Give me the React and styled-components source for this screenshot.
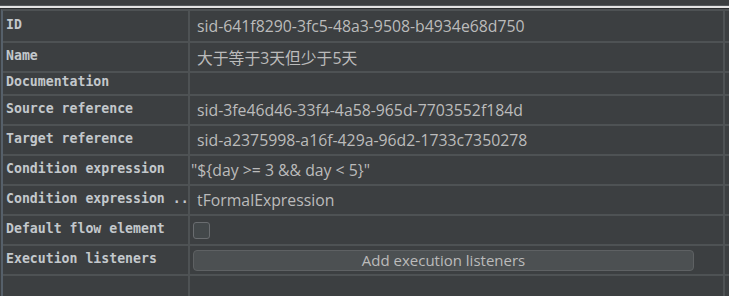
import React from "react";
import styled, { createGlobalStyle } from "styled-components";

const GlobalStyle = createGlobalStyle`
  html, body {
    margin: 0;
    padding: 0;
    background: #3c3f41;
    overflow: hidden;
  }
`;

const rows = [
  { label: "ID", value: "sid-641f8290-3fc5-48a3-9508-b4934e68d750", height: 30 },
  { label: "Name", value: "大于等于3天但少于5天", height: 28 },
  { label: "Documentation", value: "", height: 21 },
  { label: "Source reference", value: "sid-3fe46d46-33f4-4a58-965d-7703552f184d", height: 28 },
  { label: "Target reference", value: "sid-a2375998-a16f-429a-96d2-1733c7350278", height: 28 },
  { label: "Condition expression", value: '"${day >= 3 && day < 5}"', height: 28, tight: true },
  { label: "Condition expression ..", value: "tFormalExpression", height: 28 },
  { label: "Default flow element", kind: "checkbox", height: 28 },
  { label: "Execution listeners", kind: "button", value: "Add execution listeners", height: 28 },
];

function Properties() {
  return (
    <Frame>
      <TopBar />
      <Splitter />
      <Table>
        {rows.map((r) => (
          <Row key={r.label} $h={r.height}>
            <LabelCell>{r.label}</LabelCell>
            <ValueCell $pad={r.tight ? 1 : r.kind ? 3 : 7}>
              {r.kind === "checkbox" && <Checkbox />}
              {r.kind === "button" && <AddButton>{r.value}</AddButton>}
              {!r.kind && r.value}
            </ValueCell>
            <ExtraCell />
          </Row>
        ))}
        <Row $h={30}>
          <LabelCell />
          <ValueCell $pad={7} />
          <ExtraCell />
        </Row>
      </Table>
    </Frame>
  );
}

export default function App() {
  return (
    <>
      <GlobalStyle />
      <Properties />
    </>
  );
}

const Frame = styled.div`
  width: 729px;
  height: 296px;
  overflow: hidden;
  display: flex;
  flex-direction: column;
  background: #3c3f41;
`;

const TopBar = styled.div`
  height: 5px;
  flex-shrink: 0;
  border-bottom: 1px solid #55595c;
`;

const Splitter = styled.div`
  height: 2px;
  flex-shrink: 0;
  background: #e4e4e4;
  border-bottom: 1px solid #2b2d2f;
`;

const Table = styled.div`
  margin-left: 1px;
  border-left: 2px solid #56606a;
  border-top: 2px solid #4e5254;
  flex: 1;
  display: flex;
  flex-direction: column;
`;

const Row = styled.div`
  display: grid;
  grid-template-columns: 187px 535px 1fr;
  height: ${(p) => p.$h + 2}px;
  flex-shrink: 0;
  box-sizing: border-box;
  border-bottom: 2px solid #4e5254;
`;

const LabelCell = styled.div`
  box-sizing: border-box;
  border-right: 2px solid #4e5254;
  padding: 0 0 4px 3px;
  display: flex;
  align-items: center;
  overflow: hidden;
  white-space: nowrap;
  font-family: "DejaVu Sans Mono", "Liberation Mono", monospace;
  font-weight: bold;
  font-size: 13.2px;
  color: #c3c8cc;
`;

const ValueCell = styled.div`
  box-sizing: border-box;
  border-right: 2px solid #4e5254;
  padding-left: ${(p) => p.$pad}px;
  display: flex;
  align-items: center;
  overflow: hidden;
  white-space: nowrap;
  font-family: "Open Sans", "Noto Sans CJK SC", sans-serif;
  font-size: 15.8px;
  color: #bbbbbb;
`;

const ExtraCell = styled.div``;

const Checkbox = styled.div`
  width: 17px;
  height: 17px;
  box-sizing: border-box;
  border: 1px solid #6a6d70;
  border-radius: 3px;
  background: #43484a;
`;

const AddButton = styled.button`
  width: 501px;
  height: 21px;
  box-sizing: border-box;
  border: 1px solid #5e6163;
  border-radius: 4px;
  background: #4c5052;
  color: #bbbbbb;
  font-family: "Open Sans", sans-serif;
  font-size: 15px;
  line-height: 19px;
  padding: 0 0 1px;
`;
